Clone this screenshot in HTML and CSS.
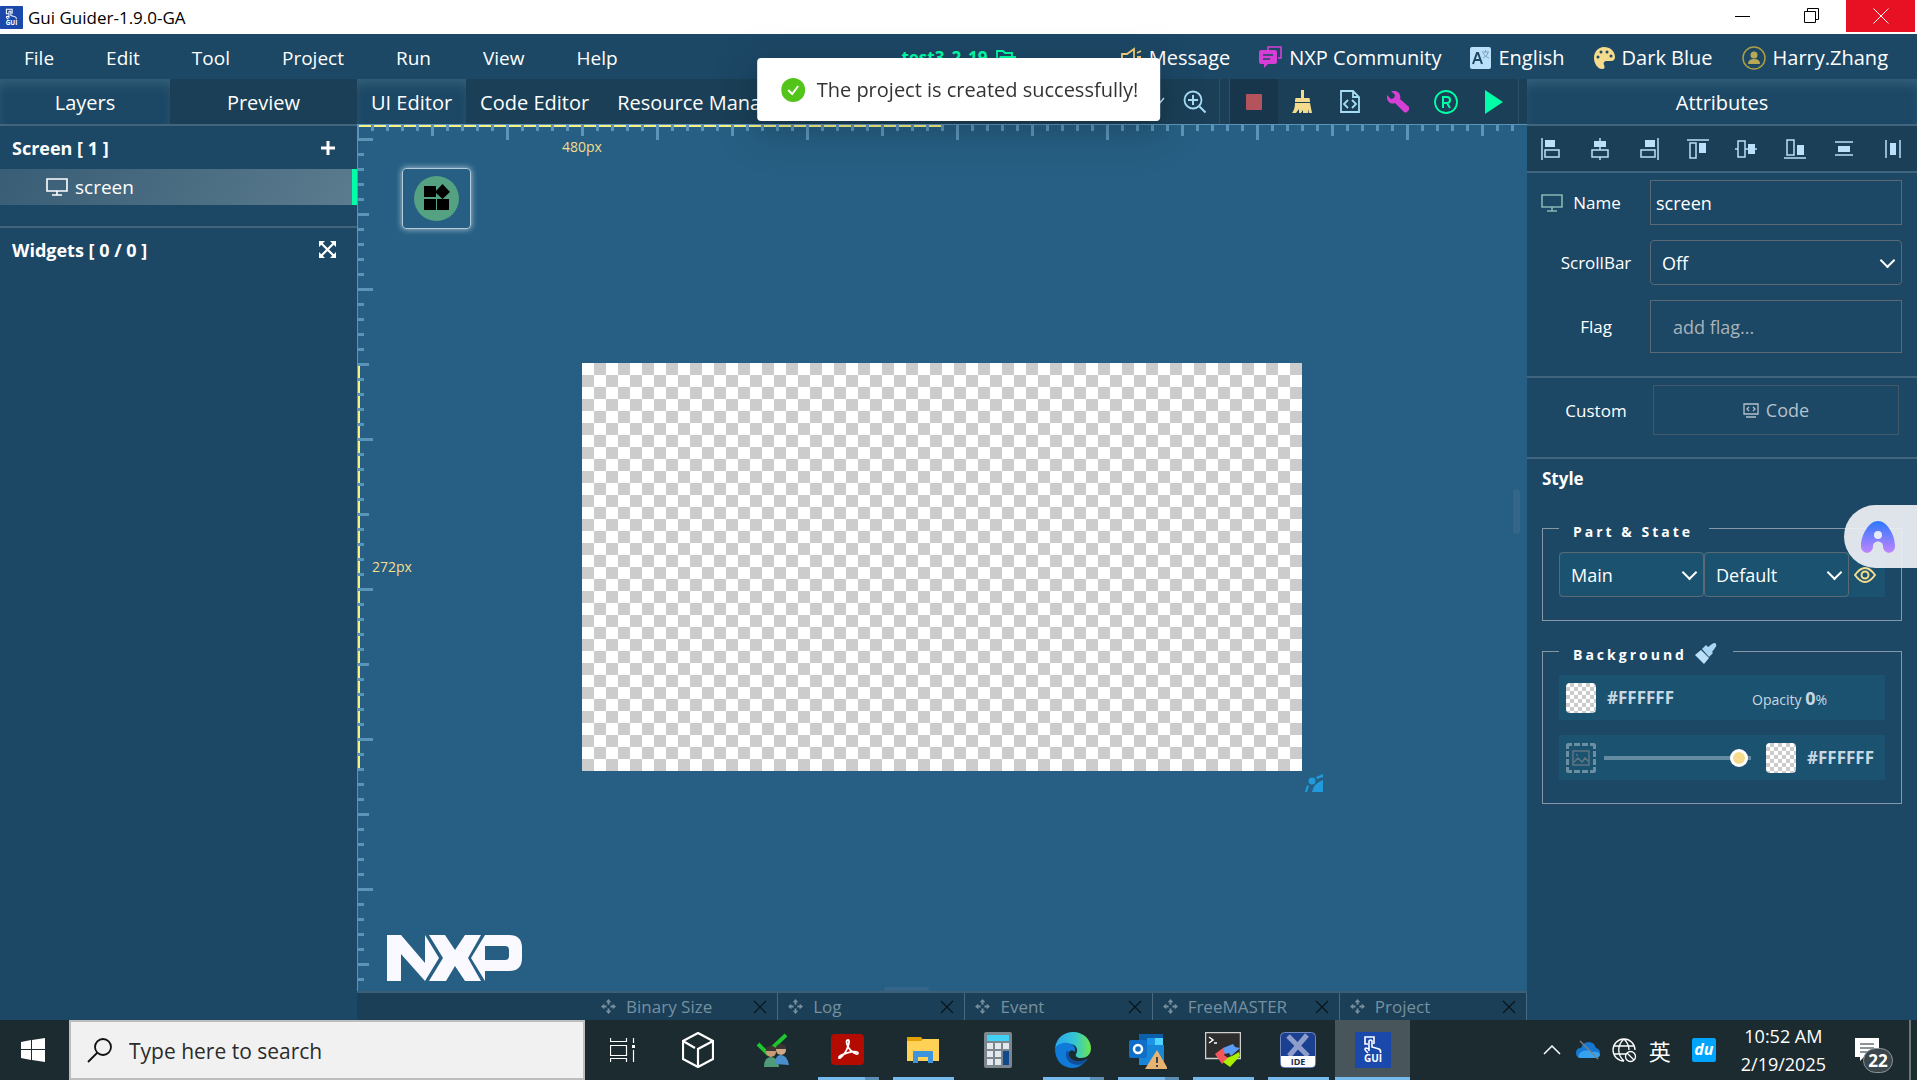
FILE: index.html
```html
<!DOCTYPE html>
<html lang="en">
<head>
  <meta charset="UTF-8">
  <meta name="viewport" content="width=device-width, initial-scale=1.0">
  <title>Gui Guider-1.9.0-GA</title>
  <link rel="stylesheet" href="styles.css">
</head>
<body>
  <!-- Shared icons -->
  <svg class="sprite" width="0" height="0">
    <symbol id="i-gui" viewBox="0 0 36 36">
      <rect width="36" height="36" rx="1" fill="#1a48ab"/>
      <path d="M13 12h-3V5h9v7M14 19V9q1.500-2 3 0v6l7 2q2 1 1.500 4M14 17l-3-1q-2 1 0 3l2 2" fill="none" stroke="#fff" stroke-width="1.600"/>
      <text x="18" y="30" text-anchor="middle" font-size="10" font-weight="700" fill="#fff">GUI</text>
    </symbol>
    <symbol id="i-monitor" viewBox="0 0 22 18">
      <path d="M1 1h20v12H1zM6 17h10M11 13v4" fill="none" stroke="currentColor" stroke-width="1.6"/>
    </symbol>
    <symbol id="i-move" viewBox="0 0 16 16">
      <path d="M8 0l3 3.500H9V6H7V3.500H5zM8 16l-3-3.500h2V10h2v2.500h2zM0 8l3.500-3v2H6v2H3.500v2zM16 8l-3.500 3V9H10V7h2.500V5z" fill="currentColor"/>
    </symbol>
    <symbol id="i-close" viewBox="0 0 14 14">
      <path d="M1 1l12 12M13 1L1 13" fill="none" stroke="currentColor" stroke-width="1.2"/>
    </symbol>
  </svg>

  <!-- Title bar -->
  <header class="titlebar">
    <svg class="app-icon"><use href="#i-gui"/></svg>
    <span class="app-title">Gui Guider-1.9.0-GA</span>
    <div class="window-buttons">
      <button aria-label="Minimize"><svg width="16" height="16"><path d="M0 8.500h15" stroke="#000"/></svg></button>
      <button aria-label="Restore"><svg width="16" height="16"><path d="M.5 3.500h11v11H.5zM3.500 3.500v-3h11v11h-3" fill="none" stroke="#000"/></svg></button>
      <button class="close" aria-label="Close"><svg width="16" height="16"><path d="M.5.500l15 15M15.500.500l-15 15" stroke="#fff"/></svg></button>
    </div>
  </header>

  <!-- Menu bar -->
  <div class="menubar">
    <nav class="menu">
      <a href="#">File</a>
      <a href="#">Edit</a>
      <a href="#">Tool</a>
      <a href="#">Project</a>
      <a href="#">Run</a>
      <a href="#">View</a>
      <a href="#">Help</a>
    </nav>
    <div class="project-name">
      <span>test3_2_19</span>
      <svg width="20" height="18" viewBox="0 0 20 18"><path d="M1 16V2h6l2 2h7v3M1 16L4.500 8H19l-3 8z" fill="none" stroke="currentColor" stroke-width="1.800"/></svg>
    </div>
    <div class="links">
      <a href="#"><svg width="22" height="22" viewBox="0 0 22 22"><path d="M2 7h5l7-5v15l-7-4H2zM4 13v6h3v-5M17 6l4-2M17 10h4M17 13l3 2" fill="none" stroke="#f2cf7c" stroke-width="1.800"/></svg>Message</a>
      <a href="#"><svg width="23" height="24" viewBox="0 0 23 24"><path d="M9 4V1h13v11h-3" fill="none" stroke="#d63fd6" stroke-width="1.600"/><path d="M2 4h14q2 0 2 2v10q0 2-2 2h-7l-4 4v-4H2q-2 0-2-2V6q0-2 2-2z" fill="#d63fd6"/><path d="M4 9h10M4 13h7" stroke="#1c4765" stroke-width="1.500"/></svg>NXP Community</a>
      <a href="#"><svg width="21" height="22" viewBox="0 0 21 22"><rect width="21" height="22" rx="2" fill="#bbe0fa"/><path d="M3 17l4-11h1l4 11M5 13h5" fill="none" stroke="#1c4765" stroke-width="2"/><path d="M12 5h7M15.500 3v2M13 11q5-2 5-6M13 6q2 4 6 5" fill="none" stroke="#7ba4c0"/></svg>English</a>
      <a href="#"><svg width="21" height="22" viewBox="0 0 21 22"><path d="M10 0C4 0 0 5 0 11s4 11 8 11c3 0 3-2 2-4s0-4 3-4h4c3 0 4-2 4-4C21 4 16 0 10 0z" fill="#f5dc8c"/><g fill="#1c4765"><circle cx="4" cy="10" r="1.500"/><circle cx="7" cy="5" r="1.500"/><circle cx="13" cy="5" r="1.500"/><circle cx="17" cy="9" r="1.500"/></g></svg>Dark Blue</a>
      <a href="#"><svg width="24" height="24" viewBox="0 0 24 24"><circle cx="12" cy="12" r="11" fill="none" stroke="#ad9c46" stroke-width="1.500"/><circle cx="12" cy="9" r="3.500" fill="#b6a855"/><path d="M6 18q0-5 6-5t6 5z" fill="#b6a855"/></svg>Harry.Zhang</a>
    </div>
  </div>

  <main class="workspace">
    <!-- Layers -->
    <aside class="layers">
      <div class="tabs">
        <button class="tab active">Layers</button>
        <button class="tab preview">Preview</button>
      </div>
      <div class="panel-head">
        <h2>Screen [ 1 ]</h2>
        <button aria-label="Add screen"><svg width="16" height="16"><path d="M8 1v14M1 8h14" stroke="#fff" stroke-width="3"/></svg></button>
      </div>
      <a class="layer-row" href="#"><svg width="22" height="18"><use href="#i-monitor"/></svg>screen</a>
      <div class="panel-head widgets">
        <h2>Widgets [ 0 / 0 ]</h2>
        <button aria-label="Expand"><svg width="17" height="17" viewBox="0 0 17 17"><path d="M2 2l13 13M15 2L2 15" stroke="#fff" stroke-width="2.200"/><path d="M0 0h6L0 6zM17 0v6l-6-6zM0 17v-6l6 6zM17 17h-6l6-6z" fill="#fff"/></svg></button>
      </div>
    </aside>

    <!-- Editor -->
    <section class="editor">
      <div class="tabs">
        <button class="tab active">UI Editor</button>
        <button class="tab">Code Editor</button>
        <button class="tab">Resource Manager</button>
        <div class="tools zoom-tools">
          <svg width="14" height="10" viewBox="0 0 14 10"><path d="M1 1l6 7 6-7" fill="none" stroke="#bbe0fa" stroke-width="1.500"/></svg>
          <button aria-label="Zoom in"><svg width="24" height="24" viewBox="0 0 24 24"><path d="M10 5v10M5 10h10M16.500 16.500l6 6" stroke="#a6dcf5" stroke-width="2"/><circle cx="10" cy="10" r="8.500" fill="none" stroke="#a6dcf5" stroke-width="1.800"/></svg></button>
        </div>
        <div class="tools run-tools">
          <button class="stop" aria-label="Stop"><svg width="16" height="16"><rect width="16" height="16" rx="1" fill="#b4535c"/></svg></button>
          <button aria-label="Clean"><svg width="20" height="24" viewBox="0 0 20 24"><path d="M9 0h3v8h5q1 0 1 4H3q0-4 1-4h5zM3 13h15l2 10h-3l-1-4v4h-5v-3l-2 3H7v-4l-3 4H0q3-4 3-10z" fill="#f5dc8c"/></svg></button>
          <button aria-label="Generate code"><svg width="20" height="24" viewBox="0 0 20 24"><path d="M1 1h12l6 6v15H1zM13 1v6h6M8 10l-4 4 4 4M12 10l4 4-4 4" fill="none" stroke="#a6dcf5" stroke-width="1.800"/></svg></button>
          <button aria-label="Settings"><svg width="22" height="22" viewBox="0 0 22 22"><path d="M4 0l4 4-1 3-3 1-4-4q-1 5 3 8 3 1 5 0l9 9q2 1 3 0l2-2q1-1 0-3l-9-8q1-3-1-6-3-3-8-2z" fill="#d63fd6"/></svg></button>
          <button aria-label="Run on target"><svg width="24" height="24" viewBox="0 0 24 24"><circle cx="12" cy="12" r="11" fill="none" stroke="#00ffa6" stroke-width="1.800"/><path d="M9 18V7h4q3 0 3 3t-3 3H9M13 13l3 5" fill="none" stroke="#00ffa6" stroke-width="2"/></svg></button>
          <button aria-label="Run simulator"><svg width="20" height="24"><path d="M1 0l18 12L1 24z" fill="#00ffa6"/></svg></button>
        </div>
      </div>

      <div class="stage">
        <span class="size-label size-x">480px</span>
        <span class="size-label size-y">272px</span>
        <button class="widget-button" aria-label="Widgets">
          <svg width="45" height="45"><circle cx="22.500" cy="22.500" r="22.500" fill="#55a282"/><path d="M10 10h12v11H10zM10 23h12v11H10zM23 23h12v11H23zM28.500 8l7.500 8-7.500 7-7.500-7z" fill="#000"/></svg>
        </button>
        <div class="canvas">
          <svg class="resize" width="18" height="18" viewBox="0 0 18 18"><g fill="#219bdb"><path d="M7 18Q9 9 18 6v12z"/><circle cx="7" cy="7" r="3.500"/><path d="M11 3l7-3v3l-6 2zM2 11l2 1-2 6H0z"/></g></svg>
        </div>
        <svg class="nxp" width="135" height="46" viewBox="0 0 135 46"><g fill="#faf9ff"><path d="M0 0h14l24 28V0l14 23-14 23-24-27v27H0z"/><path d="M42 0h16l10 15L78 0h16L81 23l13 23H78L68 31 59 46H42l14-23z"/><path d="M98 0h24q13 0 13 13v10q0 13-13 13H98v10L84 23zM98 11v14h20q4 0 4-4v-6q0-4-4-4z" fill-rule="evenodd"/></g></svg>
        <i class="handle handle-right"></i>
        <i class="handle handle-bottom"></i>
      </div>

      <div class="dock">
        <div class="dock-tab"><svg width="15" height="15"><use href="#i-move"/></svg><span>Binary Size</span><button aria-label="Close"><svg width="14" height="14"><use href="#i-close"/></svg></button></div>
        <div class="dock-tab"><svg width="15" height="15"><use href="#i-move"/></svg><span>Log</span><button aria-label="Close"><svg width="14" height="14"><use href="#i-close"/></svg></button></div>
        <div class="dock-tab"><svg width="15" height="15"><use href="#i-move"/></svg><span>Event</span><button aria-label="Close"><svg width="14" height="14"><use href="#i-close"/></svg></button></div>
        <div class="dock-tab"><svg width="15" height="15"><use href="#i-move"/></svg><span>FreeMASTER</span><button aria-label="Close"><svg width="14" height="14"><use href="#i-close"/></svg></button></div>
        <div class="dock-tab"><svg width="15" height="15"><use href="#i-move"/></svg><span>Project</span><button aria-label="Close"><svg width="14" height="14"><use href="#i-close"/></svg></button></div>
      </div>
    </section>

    <!-- Attributes -->
    <aside class="attributes">
      <h2 class="tab active">Attributes</h2>
      <div class="align-bar">
        <button aria-label="Align left"><svg width="20" height="22"><path d="M1 0v22" stroke="#bbe0fa" stroke-width="1.500"/><path d="M4 2h10v7H4z" fill="#bbe0fa"/><path d="M4 12h14v7H4z" fill="none" stroke="#bbe0fa" stroke-width="1.500"/></svg></button>
        <button aria-label="Align center"><svg width="20" height="22"><path d="M10 0v12M10 19v3" stroke="#bbe0fa" stroke-width="1.500"/><path d="M4 3h12v6H4z" fill="#bbe0fa"/><path d="M2 12h16v7H2z" fill="none" stroke="#bbe0fa" stroke-width="1.500"/></svg></button>
        <button aria-label="Align right"><svg width="20" height="22"><path d="M19 0v22" stroke="#bbe0fa" stroke-width="1.500"/><path d="M6 2h10v7H6z" fill="#bbe0fa"/><path d="M2 12h14v7H2z" fill="none" stroke="#bbe0fa" stroke-width="1.500"/></svg></button>
        <button aria-label="Align top"><svg width="22" height="20"><path d="M0 1h22" stroke="#bbe0fa" stroke-width="1.500"/><path d="M12 4h7v10h-7z" fill="#bbe0fa"/><path d="M3 4h6v15H3z" fill="none" stroke="#bbe0fa" stroke-width="1.500"/></svg></button>
        <button aria-label="Align middle"><svg width="22" height="20"><path d="M0 10h3M10 10h12" stroke="#bbe0fa" stroke-width="1.500"/><path d="M13 5h7v10h-7z" fill="#bbe0fa"/><path d="M3 2h7v16H3z" fill="none" stroke="#bbe0fa" stroke-width="1.500"/></svg></button>
        <button aria-label="Align bottom"><svg width="22" height="20"><path d="M0 19h22" stroke="#bbe0fa" stroke-width="1.500"/><path d="M13 6h7v10h-7z" fill="#bbe0fa"/><path d="M3 1h7v15H3z" fill="none" stroke="#bbe0fa" stroke-width="1.500"/></svg></button>
        <button aria-label="Distribute vertically"><svg width="18" height="16"><path d="M0 1h18M0 14h18" stroke="#bbe0fa" stroke-width="1.500"/><path d="M3 5h12v6H3z" fill="#bbe0fa"/></svg></button>
        <button aria-label="Distribute horizontally"><svg width="16" height="18"><path d="M1 0v18M15 0v18" stroke="#bbe0fa" stroke-width="1.500"/><path d="M5 3h6v12H5z" fill="#bbe0fa"/></svg></button>
      </div>

      <div class="form">
        <div class="form-group">
          <label for="name"><svg width="22" height="18"><use href="#i-monitor"/></svg>Name</label>
          <input type="text" id="name" value="screen">
        </div>
        <div class="form-group">
          <label for="scrollbar">ScrollBar</label>
          <div class="select"><select id="scrollbar"><option>Off</option></select></div>
        </div>
        <div class="form-group">
          <label for="flag">Flag</label>
          <input type="text" id="flag" class="flag" placeholder="add flag...">
        </div>
      </div>

      <div class="form-group custom">
        <span class="label">Custom</span>
        <button class="code-btn"><svg width="16" height="15" viewBox="0 0 16 15"><path d="M1 1h14v10H1zM3 14h10M6 4L4 6l2 2M10 4l2 2-2 2" fill="none" stroke="currentColor" stroke-width="1.300"/></svg>Code</button>
      </div>

      <div class="style-panel">
        <h3>Style</h3>
        <fieldset>
          <legend>Part &amp; State</legend>
          <div class="prop-row">
            <div class="select"><select aria-label="Part"><option>Main</option></select></div>
            <div class="select"><select aria-label="State"><option>Default</option></select></div>
            <button class="eye" aria-label="Show"><svg width="22" height="16" viewBox="0 0 22 16"><path d="M1 8q10-14 20 0-10 14-20 0z" fill="none" stroke="#f5dc8c" stroke-width="2"/><circle cx="11" cy="8" r="3.500" fill="none" stroke="#f5dc8c" stroke-width="2"/></svg></button>
          </div>
        </fieldset>
        <fieldset>
          <legend>Background<svg width="22" height="22" viewBox="0 0 22 22"><path d="M13 4l4-3q3-2 4 0t-1 4l-3 4 1 1-4 4-7-8 4-4z" fill="#a9d6f3"/><path d="M6 7l8 8-5 6L0 12z" fill="#bbe0fa"/></svg></legend>
          <div class="prop-row">
            <button class="swatch" aria-label="Background color"></button>
            <b>#FFFFFF</b>
            <span class="opacity">Opacity <b>0</b>%</span>
          </div>
          <div class="prop-row">
            <button class="image-slot" aria-label="Background image"><svg width="18" height="16" viewBox="0 0 18 16"><path d="M1 1h16v14H1zM1 13l5-5 4 4 3-4 4 4" fill="none" stroke="#5d7480" stroke-width="1.500"/><circle cx="5" cy="5" r="1" fill="#5d7480"/></svg></button>
            <input type="range" min="0" max="100" value="98" aria-label="Image opacity">
            <button class="swatch" aria-label="Recolor"></button>
            <b>#FFFFFF</b>
          </div>
        </fieldset>
      </div>
    </aside>
  </main>

  <!-- Taskbar -->
  <footer class="taskbar">
    <button class="start" aria-label="Start"><svg width="24" height="24"><path d="M0 4l10-2v9H0zM11 2l13-2v11H11zM0 12h10v10L0 20zM11 12h13v12l-13-2z" fill="#fff"/></svg></button>
    <div class="search">
      <svg width="25" height="25"><circle cx="16" cy="9" r="8" fill="none" stroke="#111" stroke-width="1.800"/><path d="M10.500 14.500L1 24" stroke="#111" stroke-width="1.800"/></svg>
      <input type="text" aria-label="Search" placeholder="Type here to search">
    </div>
    <div class="apps">
      <button aria-label="Task View"><svg width="26" height="24"><path d="M.5 0v3.500h16V0M.5 7.500h16v10H.5zM.5 24v-3.500h16V24M23.500 0v5M23.500 12v12" fill="none" stroke="#fff" stroke-width="1.200"/><path d="M22 7h3v3h-3z" fill="#fff"/></svg></button>
      <button aria-label="3D Viewer"><svg width="32" height="36"><path d="M16 1l15 8v18l-15 8-15-8V9zM1 9l12 7M31 9l-15 8v18" fill="none" stroke="#fff" stroke-width="2.200"/></svg></button>
      <button aria-label="Contacts"><svg width="34" height="36"><path d="M2 12l9 9L30 3" fill="none" stroke="#1fc52c" stroke-width="4"/><path d="M8 35q0-10 7-10t8 10z" fill="#4f9a78"/><path d="M19 32q0-9 6-9t8 10z" fill="#4a8ecb"/><circle cx="15" cy="20" r="5" fill="#c79b78"/><circle cx="25" cy="18" r="5" fill="#d0a684"/><path d="M10 19q0-5 5-5t5 5zM20 17q0-5 5-5t5 5z" fill="#3a3532"/></svg></button>
      <button class="open stacked" aria-label="Acrobat"><svg width="34" height="34"><rect y="1" width="33" height="31" rx="4" fill="#b30b00"/><path d="M8 25c-2-3 18-9 19-5 0 3-7-1-10-6-2-5-2-7 0-7s1 4-1 9-7 10-8 9z" fill="none" stroke="#fff" stroke-width="1.800"/></svg></button>
      <button class="open" aria-label="File Explorer"><svg width="32" height="28"><path d="M0 1h14l3 4H0z" fill="#e2a100"/><path d="M0 5h14l2-2h16v22H0z" fill="#ffd257"/><path d="M6 27V16q0-1 1-1h18q1 0 1 1v11h-5v-6H11v6z" fill="#3c94dd"/></svg></button>
      <button aria-label="Calculator"><svg width="28" height="36"><rect width="28" height="36" rx="2" fill="#7c868e"/><path d="M3 3h22v6H3z" fill="#41d0f6"/><path d="M3 11h6v6H3zM11 11h6v6h-6zM19 11h6v6h-6zM3 19h6v6H3zM11 19h6v6h-6zM3 27h6v6H3zM11 27h6v6h-6z" fill="#e3e8ec"/><path d="M19 19h6v14h-6z" fill="#104a8c"/></svg></button>
      <button class="open stacked" aria-label="Edge"><svg width="36" height="36"><defs><linearGradient id="g-edge"><stop offset="0" stop-color="#2ba6ee"/><stop offset=".55" stop-color="#35c5d6"/><stop offset="1" stop-color="#6be64b"/></linearGradient></defs><path d="M0 17C1 5 10 0 18 0c11 0 18 8 18 16 0 7-5 10-10 10-4 0-6-2-5-4 3-5 0-10-7-10C6 12 1 14 0 17z" fill="url(#g-edge)"/><path d="M0 17c2-5 8-7 13-6 6 1 8 5 7 9-4-3-7-1-7 4 0 6 8 9 19 3-4 6-9 9-14 9C7 36 0 28 0 17z" fill="#0f7ad8"/><path d="M12 18c-3 7 1 14 10 15 5 0 9-3 11-6-9 4-19 2-19-5z" fill="#0f4f9d"/></svg></button>
      <button class="open stacked" aria-label="Outlook"><svg width="38" height="38"><path d="M10 3h24v11H10z" fill="#0b5ea8"/><path d="M18 7h8v8h-8z" fill="#1d94e5"/><path d="M26 7h8v7h-8z" fill="#4fd4ff"/><path d="M10 14h25v20H10z" fill="#1786d6"/><rect y="9" width="18" height="18" rx="2" fill="#0f6fc8"/><circle cx="9" cy="18" r="4" fill="none" stroke="#fff" stroke-width="2.500"/><path d="M28 19l11 19H16z" fill="#e8b270"/><path d="M28 26v6M28 34v2" stroke="#39424a" stroke-width="2"/></svg></button>
      <button class="open" aria-label="Terminal"><svg width="36" height="36"><path d="M.5.500h35v26H.5z" fill="#2d2d2d" stroke="#d0d0d0" stroke-width="1.500"/><path d="M4 5l4 3-4 3M9 11h3" fill="none" stroke="#fff" stroke-width="1.500"/><path d="M10 22l8-6 3 3-2 4 4 3-6 6z" fill="#f5565a"/><path d="M18 16l10-4 2 3 5 1-9 8-2-3-4 1z" fill="#5b9cf5"/><path d="M18 30l6-5 3-1 7-4 1 4-10 11z" fill="#a9f000"/></svg></button>
      <button class="open" aria-label="MCUXpresso IDE"><svg width="36" height="36"><rect x=".5" y=".5" width="35" height="35" rx="4" fill="#1b3f91" stroke="#7187bb"/><path d="M8 4l20 20M27 3L9 24" stroke="#8e9dcc" stroke-width="5"/><path d="M1 24h34v8q0 3-3 3H4q-3 0-3-3z" fill="#fff"/><text x="18" y="33" text-anchor="middle" font-size="9" font-weight="700" fill="#1b2b52">IDE</text></svg></button>
      <button class="open current" aria-label="Gui Guider"><svg width="36" height="36"><use href="#i-gui"/></svg></button>
    </div>
    <div class="tray">
      <svg class="more" width="18" height="10"><path d="M1 9l8-8 8 8" fill="none" stroke="#fff" stroke-width="1.500"/></svg>
      <svg width="24" height="20"><path d="M5 18q-5 0-5-5t5-5q2-6 8-6 5 0 7 6 4 1 4 5t-4 5z" fill="#1677d2"/><path d="M3 18q-2-4 4-7 5-2 9 1 7-1 8 3-1 3-4 3z" fill="#34a2ee"/><path d="M4 1l18 18" stroke="#7d8084" stroke-width="1.500"/></svg>
      <svg width="25" height="25"><path d="M12 1a11 11 0 1 0 0 22M12 1a11 11 0 0 1 11 11M12 1c-7 6-7 16 0 22M12 1c3 3 5 7 5 11M2 8h20M2 16h12" fill="none" stroke="#fff" stroke-width="1.300"/><circle cx="18.500" cy="18.500" r="5" fill="none" stroke="#fff" stroke-width="1.300"/><path d="M15 15l7 7" stroke="#fff" stroke-width="1.300"/></svg>
      <span class="ime">英</span>
      <span class="du">du</span>
      <div class="clock"><span>10:52 AM</span><span>2/19/2025</span></div>
      <button class="notifications" aria-label="Notifications"><svg width="24" height="24"><path d="M0 0h24v19H9l-4 4v-4H0z" fill="#fff"/><path d="M5 6h14M5 10h14M5 14h9" stroke="#1c2b30"/></svg><span class="count">22</span></button>
    </div>
  </footer>

  <!-- Assistant bubble -->
  <button class="assistant" aria-label="Assistant">
    <svg width="34" height="32"><defs><linearGradient id="g-ai" x2="0" y2="1"><stop offset="0" stop-color="#2b78ff"/><stop offset="1" stop-color="#c084ff"/></linearGradient></defs><path d="M17 0C26 0 34 14 34 25c0 9-12 9-12 0 0-6-10-6-10 0 0 9-12 9-12 0C0 14 8 0 17 0z" fill="url(#g-ai)"/><circle cx="17" cy="14" r="4" fill="#e6eaf2"/></svg>
  </button>

  <!-- Success message -->
  <div class="toast" role="status">
    <svg width="24" height="24"><circle cx="12" cy="12" r="12" fill="#52c41a"/><path d="M7 12l4 4 6-8" fill="none" stroke="#fff" stroke-width="2"/></svg>
    <span>The project is created successfully!</span>
  </div>
</body>
</html>
```
FILE: styles.css
```css
* {
  margin: 0;
  padding: 0;
  box-sizing: border-box;
}
body {
  display: flex;
  flex-direction: column;
  height: 100vh;
  overflow: hidden;
  font-family: "Open Sans", "Noto Sans", "Noto Sans CJK SC", sans-serif;
  font-size: 17px;
  color: #fff;
  background-color: #1c4765;
}
button, input, select {
  font: inherit;
  color: inherit;
  background: none;
  border: none;
}
button {
  display: flex;
  align-items: center;
  justify-content: center;
}
a {
  color: inherit;
  text-decoration: none;
}
svg {
  flex: none;
  display: block;
}
.sprite {
  position: absolute;
}

/* Title bar */
.titlebar {
  display: flex;
  align-items: center;
  flex: none;
  height: 34px;
  background-color: #fff;
  color: #000;
}
.app-icon {
  width: 23px;
  height: 23px;
}
.app-title {
  margin-left: 5px;
}
.window-buttons {
  display: flex;
  align-self: flex-start;
  margin-left: auto;
  margin-right: 2px;
}
.window-buttons button {
  width: 69px;
  height: 32px;
}
.window-buttons .close {
  background-color: #e81123;
}

/* Menu bar */
.menubar {
  display: grid;
  grid-template-columns: 1fr auto 1fr;
  align-items: center;
  flex: none;
  height: 45px;
  padding-top: 2px;
}
.menu {
  display: flex;
  gap: 52px;
  padding-left: 24px;
  font-size: 19px;
}
.project-name {
  display: flex;
  align-items: center;
  gap: 8px;
  color: #00ffa6;
  font-weight: bold;
}
.links {
  display: flex;
  justify-content: flex-end;
  gap: 29px;
  padding-right: 29px;
  font-size: 20px;
}
.links a {
  display: flex;
  align-items: center;
  gap: 7px;
}

/* Workspace */
.workspace {
  display: grid;
  grid-template-columns: 357px 1fr 390px;
  flex: 1;
  min-height: 0;
}
.tabs {
  display: flex;
  flex: none;
  height: 45px;
  background-color: #1a3f56;
}
.tab {
  padding: 2px 14px 0;
  font-size: 20px;
  white-space: nowrap;
}
.tab.active {
  background-color: #1c4765;
  box-shadow: inset 0 8px 12px -3px rgba(110, 155, 175, 0.3);
}
.layers .tabs {
  height: 47px;
  border-bottom: 2px solid #41657c;
}
.layers .tab {
  width: 170px;
}
.layers .preview {
  flex: 1;
}
.panel-head {
  display: flex;
  align-items: center;
  justify-content: space-between;
  height: 43px;
  padding: 0 21px 0 12px;
}
.panel-head h2 {
  font-size: 18px;
}
.layer-row {
  display: flex;
  align-items: center;
  gap: 7px;
  height: 36px;
  padding-left: 46px;
  font-size: 19px;
  background: linear-gradient(120deg, #385d75, #5b7b8e);
  border-right: 5px solid #00ffa6;
}
.widgets {
  height: 45px;
  margin-top: 21px;
  border-top: 2px solid #41657c;
}

/* Editor */
.editor {
  display: flex;
  flex-direction: column;
  min-width: 0;
}
.tools {
  display: flex;
  align-items: center;
  border-left: 1px solid #2d5066;
  border-right: 1px solid #2d5066;
}
.zoom-tools {
  width: 190px;
  justify-content: flex-end;
  gap: 18px;
  margin-left: auto;
  margin-right: 9px;
  padding-right: 12px;
}
.run-tools {
  margin-right: 8px;
}
.run-tools button {
  width: 48px;
  height: 45px;
}
.run-tools .stop {
  background-color: #17364b;
}

/* Stage with both rulers drawn as backgrounds, ticks every 15px */
.stage {
  --tick: #5c94b8;
  position: relative;
  display: flex;
  align-items: center;
  justify-content: center;
  flex: 1;
  padding-top: 18px;
  background-color: #265f83;
  background-image:
    linear-gradient(var(--tick), var(--tick)),
    linear-gradient(var(--tick), var(--tick)),
    repeating-linear-gradient(90deg, var(--tick) 0 3px, transparent 3px 150px),
    repeating-linear-gradient(90deg, var(--tick) 0 3px, transparent 3px 75px),
    repeating-linear-gradient(90deg, var(--tick) 0 3px, transparent 3px 15px),
    repeating-linear-gradient(var(--tick) 0 3px, transparent 3px 150px),
    repeating-linear-gradient(var(--tick) 0 3px, transparent 3px 75px),
    repeating-linear-gradient(var(--tick) 0 3px, transparent 3px 15px),
    linear-gradient(#f7f283, #f7f283),
    linear-gradient(#f7f283, #f7f283);
  background-size: 100% 1px, 1px 100%, 100% 16px, 100% 12px, 100% 7px, 16px 100%, 12px 100%, 7px 100%, 582px 2px, 2px 405px;
  background-position: 0 0, 0 0, -1px 0, -1px 0, -1px 0, 0 14px, 0 14px, 0 14px, 2px 1px, 1px 242px;
  background-repeat: no-repeat;
}
.size-label {
  position: absolute;
  font-size: 14px;
  line-height: 20px;
  color: #f5dc8c;
}
.size-x {
  left: 205px;
  top: 13px;
}
.size-y {
  left: 15px;
  top: 433px;
}
.widget-button {
  position: absolute;
  left: 45px;
  top: 44px;
  width: 69px;
  height: 61px;
  border: 1px solid #b4cad8;
  border-radius: 4px;
  box-shadow: 0 0 6px #b4cad8;
}
.canvas {
  position: relative;
  width: 720px;
  height: 408px;
  background: repeating-conic-gradient(#ccc 0 25%, #fff 0 50%) 0 0 / 24px 24px;
}
.resize {
  position: absolute;
  left: 100%;
  top: 100%;
  margin: 3px;
}
.nxp {
  position: absolute;
  left: 30px;
  bottom: 10px;
}
.handle {
  position: absolute;
  background-color: #35668a;
  border-radius: 4px;
}
.handle-right {
  right: 7px;
  top: 365px;
  width: 7px;
  height: 45px;
}
.handle-bottom {
  left: 527px;
  bottom: 0;
  width: 45px;
  height: 4px;
}

/* Dock */
.dock {
  display: flex;
  justify-content: flex-end;
  flex: none;
  height: 29px;
  background-color: #1a3f56;
  border-top: 2px solid #3c6078;
  color: #7790a0;
}
.dock-tab {
  display: flex;
  align-items: center;
  gap: 10px;
  width: 16%;
  padding: 0 10px;
  border-right: 1px solid #4a697c;
}
.dock-tab button {
  margin-left: auto;
  color: #0a141b;
}

/* Attributes */
.attributes h2 {
  height: 45px;
  line-height: 43px;
  text-align: center;
  font-weight: normal;
}
.align-bar {
  display: flex;
  height: 49px;
  background-color: #1a3f56;
  border-top: 2px solid #41657c;
  border-bottom: 2px solid #41657c;
}
.align-bar button {
  flex: 1;
}
.form {
  display: flex;
  flex-direction: column;
  gap: 15px;
  padding: 7px 15px 23px 0;
}
.form-group {
  display: flex;
  align-items: center;
}
.form-group label,
.form-group .label {
  display: flex;
  align-items: center;
  justify-content: center;
  gap: 10px;
  width: 108px;
  margin-left: 15px;
}
.form-group label svg {
  color: #86b8b2;
  margin-left: -30px;
}
.form-group input {
  width: 252px;
  height: 45px;
  padding: 0 5px;
  border: 1px solid #5a6a74;
  font-size: 18px;
}
.form-group .flag {
  height: 53px;
  padding: 0 22px;
}
.flag::placeholder {
  color: #a9b3ba;
}
.select {
  position: relative;
  width: 252px;
}
.select select {
  display: block;
  width: 100%;
  height: 45px;
  padding: 0 11px;
  border: 1px solid #5a6a74;
  border-radius: 4px;
  font-size: 18px;
  appearance: none;
}
.select::after {
  content: "";
  position: absolute;
  right: 9px;
  top: 15px;
  width: 9px;
  height: 9px;
  border-right: 2px solid #fff;
  border-bottom: 2px solid #fff;
  transform: rotate(45deg);
  pointer-events: none;
}
.custom {
  height: 83px;
  padding-bottom: 15px;
  border-top: 2px solid #41657c;
  border-bottom: 2px solid #41657c;
}
.code-btn {
  gap: 7px;
  width: 246px;
  height: 50px;
  margin-left: 3px;
  border: 1px solid #41596a;
  color: #b3c1ca;
  font-size: 18px;
}
.style-panel {
  padding: 0 15px;
}
.style-panel h3 {
  font-size: 17px;
  line-height: 40px;
  margin-bottom: 16px;
}
fieldset {
  margin-bottom: 17px;
  padding: 11px 16px 23px;
  border: 1px solid #8499a5;
}
legend {
  display: flex;
  align-items: center;
  gap: 8px;
  height: 26px;
  padding: 6px 16px 0 14px;
  font-size: 14px;
  font-weight: bold;
  letter-spacing: 3px;
}
.prop-row {
  display: flex;
  align-items: center;
  height: 45px;
  background-color: #1b5270;
  color: #c8d8e2;
}
.prop-row + .prop-row {
  margin-top: 15px;
}
.prop-row .select {
  width: 145px;
  color: #fff;
}
.eye {
  margin-left: 5px;
}
.swatch {
  width: 30px;
  height: 30px;
  margin: 0 11px 0 7px;
  border-radius: 4px;
  background: repeating-conic-gradient(#ccc 0 25%, #fff 0 50%) 0 0 / 8px 8px;
}
.opacity {
  margin-left: auto;
  margin-right: 58px;
  font-size: 14px;
}
.opacity b {
  font-size: 18px;
}
.image-slot {
  width: 30px;
  height: 30px;
  margin: 0 8px 0 7px;
  border: 3px dashed #6c8ea1;
  border-radius: 3px;
}
input[type="range"] {
  flex: 1;
  min-width: 0;
  height: 18px;
  margin-right: 8px;
  appearance: none;
}
input[type="range"]::-webkit-slider-runnable-track {
  height: 4px;
  background-color: #648ba1;
}
input[type="range"]::-webkit-slider-thumb {
  appearance: none;
  width: 18px;
  height: 18px;
  margin-top: -7px;
  border: 3px solid #fff;
  border-radius: 50%;
  background-color: #f5dc8c;
}
input[type="range"] ~ b {
  margin-right: 11px;
}

/* Taskbar */
.taskbar {
  display: flex;
  flex: none;
  height: 60px;
  background-color: #1b2b30;
}
.start {
  width: 69px;
  padding-right: 3px;
}
.search {
  display: flex;
  align-items: center;
  gap: 17px;
  width: 516px;
  padding-left: 16px;
  border: 2px solid #bdbdbd;
  background-color: #f1f1f1;
}
.search input {
  flex: 1;
  padding-top: 2px;
  font-size: 21px;
}
.search input::placeholder {
  color: #2b2b2b;
}
.apps {
  display: flex;
}
.apps button {
  position: relative;
  width: 75px;
}
.apps .open::after {
  content: "";
  position: absolute;
  left: 8px;
  right: 6px;
  bottom: 0;
  height: 3px;
  background-color: #76b9ed;
}
.apps .stacked::after {
  border-right: 14px solid #5c8db4;
}
.apps .current {
  background-color: #48555a;
}
.apps .current::after {
  left: 0;
  right: 0;
}
.tray {
  display: flex;
  align-items: center;
  gap: 12px;
  margin-left: auto;
  margin-right: 6px;
  border-right: 2px solid #6d777b;
}
.more {
  margin-right: 3px;
}
.ime {
  width: 22px;
  font-size: 22px;
  line-height: 24px;
  font-family: "Noto Sans CJK SC", sans-serif;
}
.du {
  width: 24px;
  height: 24px;
  margin: 0 13px 0 9px;
  border-radius: 2px;
  background-color: #00a4fb;
  font-size: 16px;
  font-style: italic;
  font-weight: bold;
  line-height: 22px;
  text-align: center;
}
.clock {
  display: flex;
  flex-direction: column;
  align-items: center;
  font-size: 18px;
  line-height: 28px;
}
.notifications {
  position: relative;
  width: 40px;
  margin-left: 17px;
  margin-right: 14px;
  justify-content: flex-start;
}
.count {
  position: absolute;
  left: 8px;
  top: 10px;
  width: 30px;
  height: 25px;
  border: 1px solid #8c9498;
  border-radius: 13px;
  background-color: #3c474c;
  font-weight: bold;
  line-height: 23px;
}

/* Floating items */
.assistant {
  position: fixed;
  right: 0;
  top: 505px;
  width: 73px;
  height: 63px;
  padding-right: 6px;
  border-radius: 32px 0 0 32px;
  background-color: rgba(240, 242, 246, 0.92);
}
.toast {
  position: fixed;
  left: 50%;
  top: 58px;
  transform: translateX(-50%);
  display: flex;
  align-items: center;
  gap: 12px;
  height: 63px;
  padding: 0 22px 0 24px;
  border-radius: 4px;
  background-color: #fff;
  color: #333;
  font-size: 20px;
  white-space: nowrap;
  box-shadow: 0 9px 42px 12px rgba(0, 0, 0, 0.08), 0 9px 24px rgba(0, 0, 0, 0.12);
}
```
